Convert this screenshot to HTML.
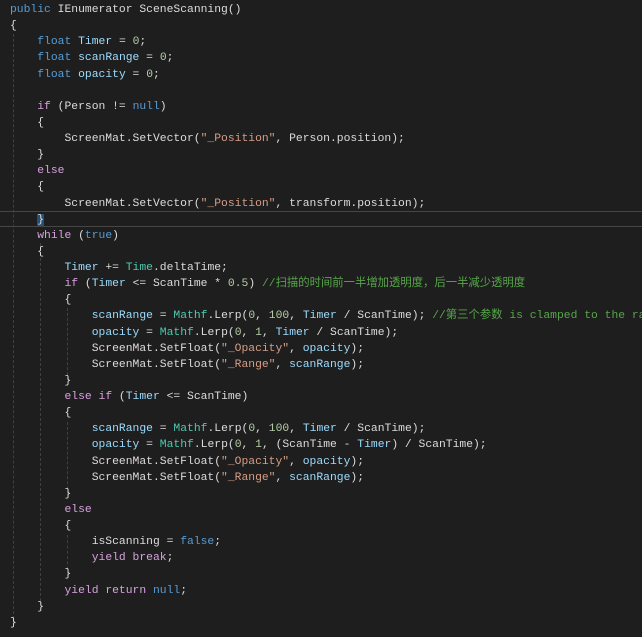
<!DOCTYPE html>
<html><head><meta charset="utf-8"><style>
html,body{margin:0;padding:0;background:#1e1e1e;width:642px;height:637px;overflow:hidden}
pre{margin:0;padding:2px 0 0 10px;font-family:"Liberation Mono","Noto Sans CJK SC",monospace;font-size:11.35px;line-height:16.13px;color:#dcdcdc;position:relative;z-index:1}
.k{color:#569cd6}.c{color:#d8a0df}.v{color:#9cdcfe}.t{color:#4ec9b0}.s{color:#d69d85}.n{color:#b5cea8}.m{color:#57a64a}
.hl{position:absolute;left:0;top:211px;width:642px;height:16px;border-top:1px solid #464646;border-bottom:1px solid #464646;box-sizing:border-box}
.g{position:absolute;border-left:1px dashed #404040}
.cur{background:#264f78}
</style></head><body>
<div class="hl"></div>
<div class="g" style="left:13px;top:34px;height:590px"></div>
<div class="g" style="left:40px;top:243px;height:358px"></div>
<div class="g" style="left:67px;top:308px;height:72px"></div>
<div class="g" style="left:67px;top:422px;height:72px"></div>
<div class="g" style="left:67px;top:535px;height:40px"></div>
<pre><span class="k">public</span> IEnumerator SceneScanning()
{
    <span class="k">float</span> <span class="v">Timer</span> = <span class="n">0</span>;
    <span class="k">float</span> <span class="v">scanRange</span> = <span class="n">0</span>;
    <span class="k">float</span> <span class="v">opacity</span> = <span class="n">0</span>;

    <span class="c">if</span> (Person != <span class="k">null</span>)
    {
        ScreenMat.SetVector(<span class="s">"_Position"</span>, Person.position);
    }
    <span class="c">else</span>
    {
        ScreenMat.SetVector(<span class="s">"_Position"</span>, transform.position);
    <span class="cur">}</span>
    <span class="c">while</span> (<span class="k">true</span>)
    {
        <span class="v">Timer</span> += <span class="t">Time</span>.deltaTime;
        <span class="c">if</span> (<span class="v">Timer</span> &lt;= ScanTime * <span class="n">0.5</span>) <span class="m">//扫描的时间前一半增加透明度，后一半减少透明度</span>
        {
            <span class="v">scanRange</span> = <span class="t">Mathf</span>.Lerp(<span class="n">0</span>, <span class="n">100</span>, <span class="v">Timer</span> / ScanTime); <span class="m">//第三个参数 is clamped to the range</span>
            <span class="v">opacity</span> = <span class="t">Mathf</span>.Lerp(<span class="n">0</span>, <span class="n">1</span>, <span class="v">Timer</span> / ScanTime);
            ScreenMat.SetFloat(<span class="s">"_Opacity"</span>, <span class="v">opacity</span>);
            ScreenMat.SetFloat(<span class="s">"_Range"</span>, <span class="v">scanRange</span>);
        }
        <span class="c">else if</span> (<span class="v">Timer</span> &lt;= ScanTime)
        {
            <span class="v">scanRange</span> = <span class="t">Mathf</span>.Lerp(<span class="n">0</span>, <span class="n">100</span>, <span class="v">Timer</span> / ScanTime);
            <span class="v">opacity</span> = <span class="t">Mathf</span>.Lerp(<span class="n">0</span>, <span class="n">1</span>, (ScanTime - <span class="v">Timer</span>) / ScanTime);
            ScreenMat.SetFloat(<span class="s">"_Opacity"</span>, <span class="v">opacity</span>);
            ScreenMat.SetFloat(<span class="s">"_Range"</span>, <span class="v">scanRange</span>);
        }
        <span class="c">else</span>
        {
            isScanning = <span class="k">false</span>;
            <span class="c">yield break</span>;
        }
        <span class="c">yield return</span> <span class="k">null</span>;
    }
}</pre>
</body></html>
